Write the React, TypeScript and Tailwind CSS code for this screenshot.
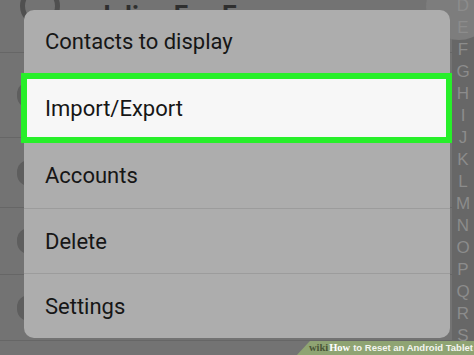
const letters = ["D", "E", "F", "G", "H", "I", "J", "K", "L", "M", "N", "O", "P", "Q", "R", "S"];

const bgRows = [
  { h: "h-[53px]", avatar: false },
  { h: "h-[85px]", avatar: true },
  { h: "h-[70px]", avatar: true },
  { h: "h-[67px]", avatar: true },
  { h: "h-[66px]", avatar: true },
];

function MenuItem({ label, divider }: { label: string; divider?: boolean }) {
  return (
    <div className={`h-[65px] flex items-center pl-[21px] ${divider ? "border-t border-[#9c9c9c]" : ""}`}>
      <span className="text-[22px] text-[#161616]">{label}</span>
    </div>
  );
}

export default function App() {
  return (
    <div className="relative w-[474px] h-[355px] overflow-hidden bg-[#737373] font-['Roboto',sans-serif]">
      {/* contact list behind the dimmed overlay */}
      <div className="flex h-full">
        <div className="flex-1 flex flex-col">
          {bgRows.map((r, i) => (
            <div key={i} className={`${r.h} relative border-b border-[#666] shrink-0`}>
              {r.avatar && (
                <div className="absolute left-[17px] top-1/2 -translate-y-1/2 w-[24px] h-[26px] rounded-full bg-[#5e5e5e]" />
              )}
            </div>
          ))}
          <div className="absolute left-[20px] -top-[14px] w-[40px] h-[40px] rounded-full border-[5px] border-[#505050]" />
          <div className="absolute left-[96px] -top-[4px] text-[26px] font-bold text-[#2f2f2f]">Julian Fox E</div>
        </div>
        <div className="w-[22px] bg-[#676767] flex flex-col items-center -mt-[6px]">
          {letters.map((l) => (
            <div
              key={l}
              className="relative z-10 h-[22px] shrink-0 flex items-center text-[17px] leading-none text-[#8c8c8c] font-['Liberation_Sans',sans-serif]"
            >
              {l}
            </div>
          ))}
        </div>
      </div>
      <div className="absolute z-[5] right-[-18px] -top-[26px] w-[66px] h-[66px] rounded-full bg-[#7d7d7d]" />

      {/* options menu */}
      <div className="absolute z-20 left-[24px] top-[10px] w-[426px] rounded-[10px] bg-[#adadad] flex flex-col">
        <div className="h-[63px] flex items-center pl-[21px]">
          <span className="text-[22px] text-[#161616]">Contacts to display</span>
        </div>
        <div className="h-[70px] -ml-[3px] -mr-[2px] border-[6px] border-[#27ef2a] bg-[#f7f7f7] flex items-center pl-[18px]">
          <span className="text-[22px] text-[#161616]">Import/Export</span>
        </div>
        <MenuItem label="Accounts" />
        <MenuItem label="Delete" divider />
        <MenuItem label="Settings" divider />
      </div>

      {/* wikiHow caption */}
      <div className="absolute z-20 right-0 bottom-0 h-[14px] bg-[#8fa473] [clip-path:polygon(13px_0,100%_0,100%_100%,0_100%)] flex items-center pl-[12px] pr-[1px] whitespace-nowrap">
        <span className="text-[10.5px] font-bold text-[#4a5637] font-['Liberation_Serif',serif]">wiki</span>
        <span className="text-[10.5px] font-bold text-white font-['Liberation_Serif',serif] ml-[1px]">How</span>
        <span className="text-[9.5px] font-bold text-[#f3f5ef] font-['Liberation_Sans',sans-serif] ml-[3px]">to Reset an Android Tablet</span>
      </div>
    </div>
  );
}
